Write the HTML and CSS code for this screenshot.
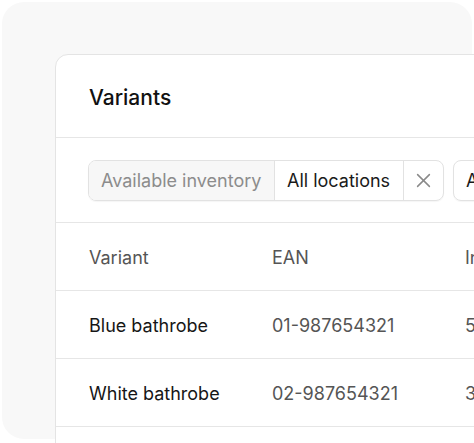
FILE: index.html
```html
<!DOCTYPE html>
<html>
<head>
<meta charset="utf-8">
<link rel="stylesheet" href="styles.css">
</head>
<body>
<div class="panel">
  <div class="card">
    <div class="card-header">Variants</div>
    <div class="filters">
      <div class="chip">
        <span class="seg seg-label">Available inventory</span>
        <span class="seg seg-value">All locations</span>
        <span class="seg seg-close">
          <svg width="15" height="15" viewBox="0 0 14 14"><path d="M1.5 1.5 L12.5 12.5 M12.5 1.5 L1.5 12.5" stroke="#8a8a8a" stroke-width="1.4" stroke-linecap="round" fill="none"/></svg>
        </span>
      </div>
      <div class="chip chip-next"><span class="seg seg-value">Add filter</span></div>
    </div>
    <div class="row head">
      <div class="c1">Variant</div><div class="c2">EAN</div><div class="c3">Inventory</div>
    </div>
    <div class="row">
      <div class="c1 name">Blue bathrobe</div><div class="c2">01-987654321</div><div class="c3">54</div>
    </div>
    <div class="row">
      <div class="c1 name">White bathrobe</div><div class="c2">02-987654321</div><div class="c3">32</div>
    </div>
    <div class="row">
      <div class="c1 name">Gray bathrobe</div><div class="c2">03-987654321</div><div class="c3">12</div>
    </div>
  </div>
</div>
</body>
</html>
```

FILE: styles.css
```css
html, body {
  margin: 0;
  padding: 0;
  background: #ffffff;
  overflow: hidden;
  width: 474px;
  height: 443px;
}
body {
  font-family: Inter, "Noto Sans", sans-serif;
  color: #141414;
}
.panel {
  margin: 2px;
  width: 470px;
  height: 437px;
  background: #f8f8f8;
  border-radius: 22px;
  padding: 52px 0 0 53px;
  box-sizing: border-box;
  overflow: visible;
}
.card {
  width: 600px;
  height: 500px;
  background: #ffffff;
  border: 1px solid #e4e4e4;
  border-radius: 13px;
  box-sizing: border-box;
}
.card-header {
  height: 83px;
  display: flex;
  align-items: center;
  padding-left: 33px;
  padding-top: 2px;
  box-sizing: border-box;
  font-size: 21px;
  font-weight: 500;
  border-bottom: 1px solid #e6e6e6;
  color: #111;
}
.filters {
  height: 85px;
  display: flex;
  align-items: center;
  gap: 9px;
  padding-left: 32px;
  padding-top: 1px;
  border-bottom: 1px solid #e6e6e6;
  box-sizing: border-box;
}
.chip {
  display: flex;
  height: 41px;
  border: 1px solid #e2e2e2;
  border-radius: 8px;
  box-sizing: border-box;
  overflow: hidden;
  flex-shrink: 0;
  box-shadow: 0 1px 1px rgba(0,0,0,0.04);
}
.seg {
  display: flex;
  align-items: center;
  padding: 0 12px;
  font-size: 18px;
  white-space: nowrap;
}
.seg-label {
  background: #f7f7f7;
  color: #8c8c8c;
  width: 186px;
  box-sizing: border-box;
  border-right: 1px solid #e2e2e2;
}
.seg-value {
  color: #1a1a1a;
  width: 129px;
  box-sizing: border-box;
  border-right: 1px solid #e2e2e2;
}
.seg-close {
  width: 39px;
  justify-content: center;
  padding: 0;
}
.chip-next .seg-value {
  width: auto;
  border-right: none;
}
.row {
  height: 68px;
  display: flex;
  align-items: center;
  padding-left: 33px;
  padding-top: 2px;
  border-bottom: 1px solid #e6e6e6;
  box-sizing: border-box;
  font-size: 18px;
  color: #555;
  white-space: nowrap;
}
.c1 { width: 183px; }
.c2 { width: 193px; }
.name { color: #161616; }
.head { color: #555; }
```
